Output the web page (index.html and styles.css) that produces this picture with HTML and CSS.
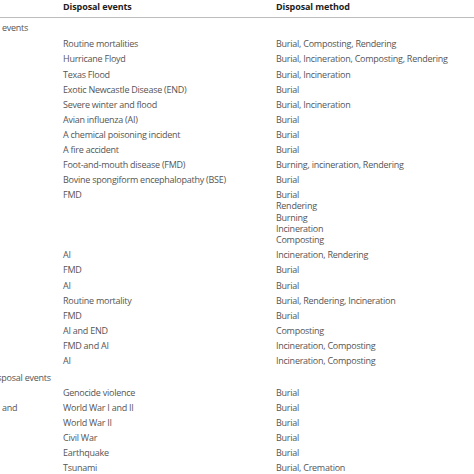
FILE: index.html
```html
<!DOCTYPE html>
<html>
<head>
<meta charset="utf-8">
<link rel="stylesheet" href="styles.css">
</head>
<body>
<div class="page">
<table class="tbl">
<colgroup><col class="c1"><col class="c2"><col class="c3"></colgroup>
<thead>
<tr class="head"><th></th><th>Disposal events</th><th>Disposal method</th></tr>
</thead>
<tbody>
<tr class="sec first"><td colspan="3">events</td></tr>
<tr><td></td><td>Routine mortalities</td><td>Burial, Composting, Rendering</td></tr>
<tr><td></td><td>Hurricane Floyd</td><td>Burial, Incineration, Composting, Rendering</td></tr>
<tr><td></td><td>Texas Flood</td><td>Burial, Incineration</td></tr>
<tr><td></td><td>Exotic Newcastle Disease (END)</td><td>Burial</td></tr>
<tr><td></td><td>Severe winter and flood</td><td>Burial, Incineration</td></tr>
<tr><td></td><td>Avian influenza (AI)</td><td>Burial</td></tr>
<tr><td></td><td>A chemical poisoning incident</td><td>Burial</td></tr>
<tr><td></td><td>A fire accident</td><td>Burial</td></tr>
<tr><td></td><td>Foot-and-mouth disease (FMD)</td><td>Burning, incineration, Rendering</td></tr>
<tr><td></td><td>Bovine spongiform encephalopathy (BSE)</td><td>Burial</td></tr>
<tr><td></td><td>FMD</td><td>Burial<br>Rendering<br>Burning<br>Incineration<br>Composting</td></tr>
<tr><td></td><td>AI</td><td>Incineration, Rendering</td></tr>
<tr><td></td><td>FMD</td><td>Burial</td></tr>
<tr><td></td><td>AI</td><td>Burial</td></tr>
<tr><td></td><td>Routine mortality</td><td>Burial, Rendering, Incineration</td></tr>
<tr><td></td><td>FMD</td><td>Burial</td></tr>
<tr><td></td><td>AI and END</td><td>Composting</td></tr>
<tr><td></td><td>FMD and AI</td><td>Incineration, Composting</td></tr>
<tr><td></td><td>AI</td><td>Incineration, Composting</td></tr>
<tr class="sec"><td colspan="3"><span class="clip">disposal events</span></td></tr>
<tr><td></td><td>Genocide violence</td><td>Burial</td></tr>
<tr><td>and</td><td>World War I and II</td><td>Burial</td></tr>
<tr><td></td><td>World War II</td><td>Burial</td></tr>
<tr><td></td><td>Civil War</td><td>Burial</td></tr>
<tr><td></td><td>Earthquake</td><td>Burial</td></tr>
<tr><td></td><td>Tsunami</td><td>Burial, Cremation</td></tr>
</tbody>
</table>
</div>
</body>
</html>
```
FILE: styles.css
```css
html, body {
  margin: 0;
  padding: 0;
  background: #ffffff;
}
.page {
  width: 474px;
  height: 474px;
  overflow: hidden;
}
.tbl {
  border-collapse: collapse;
  table-layout: fixed;
  width: 474px;
  font-family: "Open Sans", "Noto Sans", sans-serif;
  font-size: 9px;
  letter-spacing: -0.25px;
  color: #555555;
}
.c1 { width: 63px; }
.c2 { width: 213px; }
.c3 { width: 198px; }
.tbl th, .tbl td {
  padding: 1.9px 0;
  line-height: 11.3px;
  text-align: left;
  vertical-align: top;
  white-space: nowrap;
  overflow: visible;
}
.tbl td:first-child, .tbl th:first-child {
  padding-left: 2px;
}
.head th {
  font-weight: 700;
  color: #1e1e1e;
  letter-spacing: -0.1px;
  padding-top: 1.4px;
  padding-bottom: 4.3px;
  border-bottom: 1px solid #bdbdbd;
}
.sec td {
  padding-top: 3.5px;
  padding-bottom: 1.9px;
}
.sec.first td {
  padding-top: 4.5px;
  padding-bottom: 2.7px;
}
.clip {
  display: inline-block;
  margin-left: -12px;
}
```
